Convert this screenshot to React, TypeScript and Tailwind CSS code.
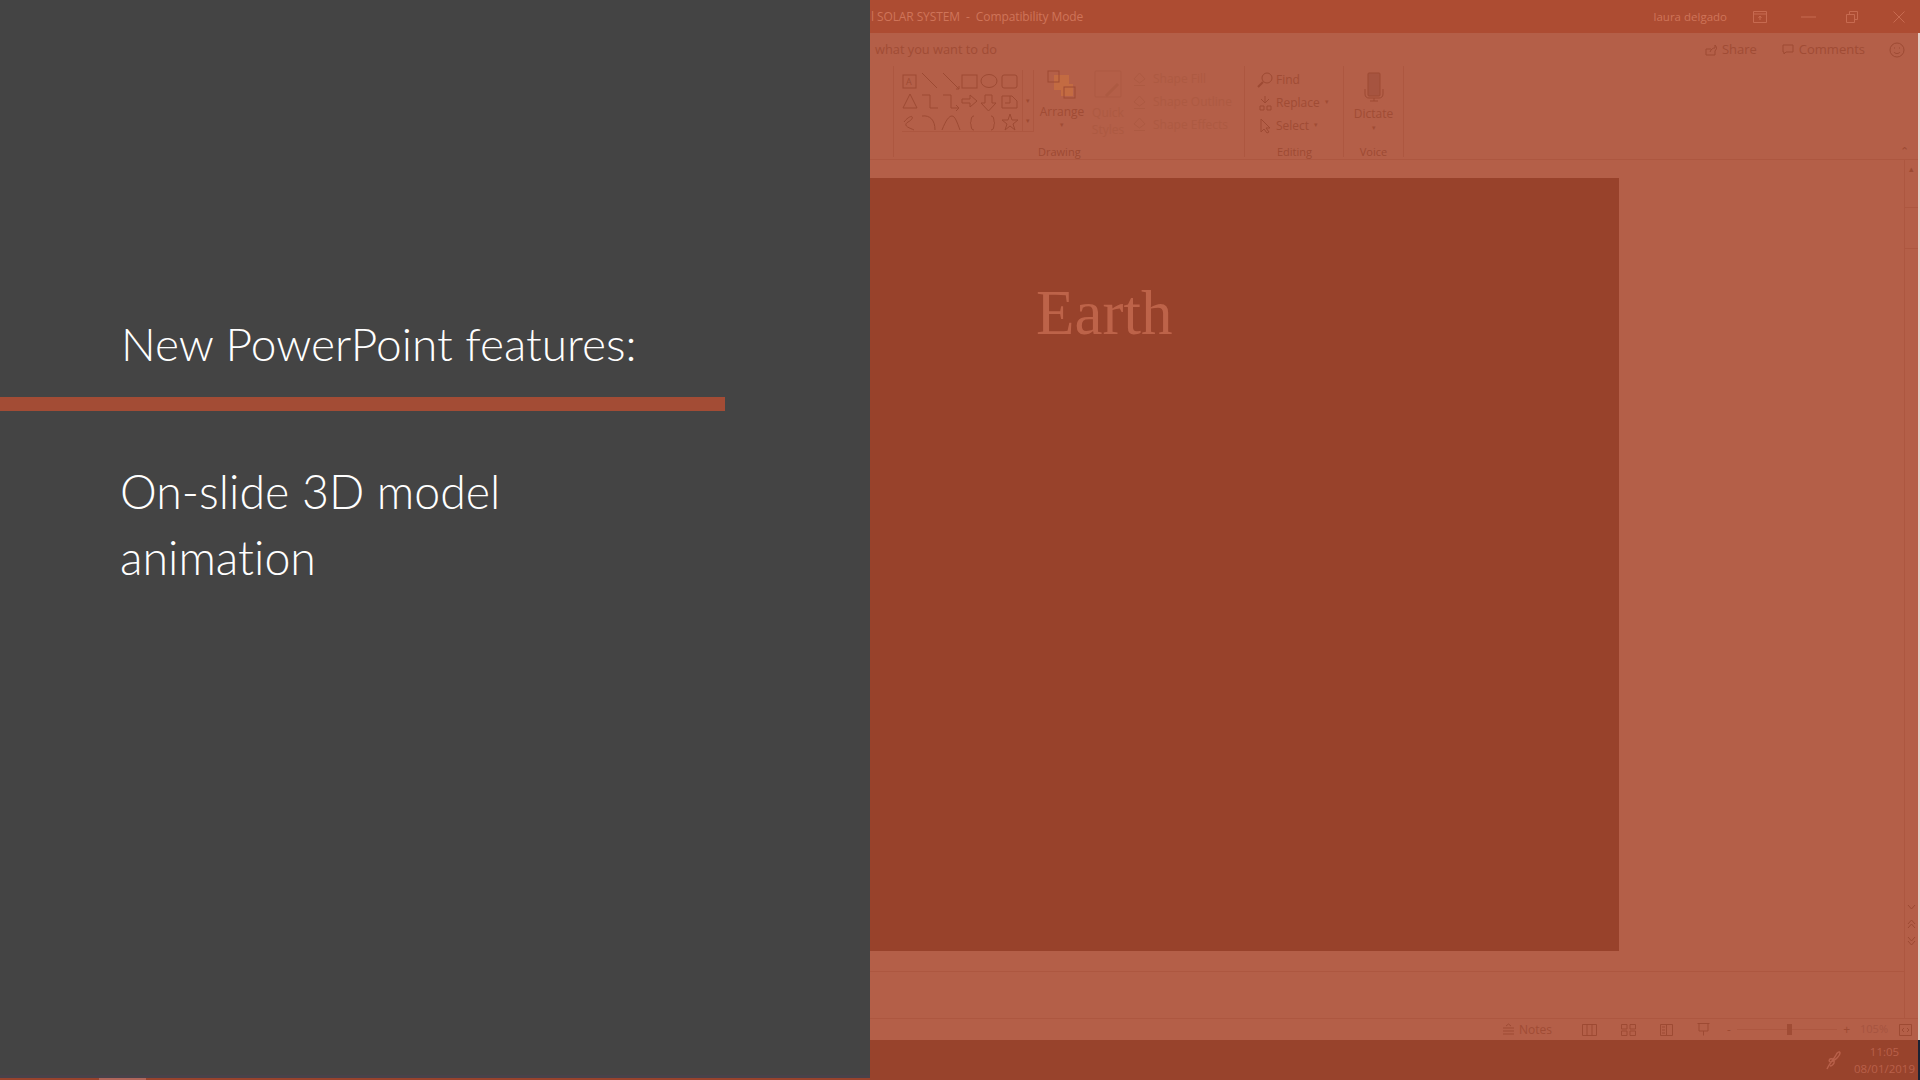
import React from 'react';

const uiFont = "font-['Open_Sans',sans-serif]";

const Stroke: React.FC<{ w: number; h: number; className?: string; children: React.ReactNode }> = ({ w, h, className, children }) => (
  <svg width={w} height={h} viewBox={`0 0 ${w} ${h}`} fill="none" stroke="#9d4a33" strokeWidth="1" className={className}>
    {children}
  </svg>
);

const ShapeGallery: React.FC = () => (
  <div className="flex w-[132px] h-[62px] border-b border-[#ad5740]">
    <Stroke w={120} h={62}>
      <rect x="1" y="5" width="13" height="13" />
      <text x="4" y="15" fontSize="9" fill="#9d4a33" stroke="none">A</text>
      <path d="M20 3 L35 18 M41 3 L57 19 M54 19 H57 V16" />
      <rect x="60" y="5" width="15" height="13" />
      <ellipse cx="87" cy="11" rx="8" ry="6.5" />
      <rect x="100" y="5" width="15" height="13" rx="2" />
      <path d="M1 38 L8 24 L15 38 Z M20 25 H28 V38 H36 M41 25 H49 V38 H57 M54 35 L57 38 L54 41" />
      <path d="M60 29 H68 V25 L75 31 L68 37 V33 H60 Z M83 25 H90 V33 H94 L86.5 41 L79 33 H83 Z" />
      <path d="M100 26 H110 L115 31 V38 H100 Z M108 26 V33 H103" />
      <path d="M2 52 C10 42 14 48 6 52 C0 56 8 58 12 60 M20 46 C28 45 33 50 33 60 M40 60 C44 50 47 46 50 46 C53 46 55 52 58 60" />
      <path d="M72 46 C68 46 70 52 68 53 C70 54 68 60 72 60 M89 46 C93 46 91 52 93 53 C91 54 93 60 89 60" />
      <path d="M108 44 L110 50 H116 L111 54 L113 60 L108 56 L103 60 L105 54 L100 50 H106 Z" />
    </Stroke>
    <div className="flex flex-col items-center justify-around w-[12px] border-x border-[#ad5740] text-[7px] leading-none text-[#9d4a33]">
      <span>&nbsp;</span>
      <span>▾</span>
      <span>▾</span>
    </div>
  </div>
);

const ArrangeIcon: React.FC = () => (
  <svg width="30" height="30" viewBox="0 0 30 30" fill="none" className="shrink-0">
    <rect x="7" y="5" width="15" height="15" fill="#c36b42" />
    <rect x="14" y="14" width="12" height="12" fill="#c36b42" />
    <rect x="1" y="1" width="11" height="11" stroke="#9d4a33" />
    <rect x="17" y="17" width="11" height="11" stroke="#9d4a33" />
  </svg>
);

const FormatRow: React.FC<{ label: string }> = ({ label }) => (
  <div className="flex items-center gap-[6px] h-[23px]">
    <svg width="15" height="15" viewBox="0 0 15 15" fill="none" stroke="#ad5a42">
      <path d="M7.5 1 L13 7 L7.5 11 L2 7 Z M2 13.5 H13" />
    </svg>
    <span className="text-[12px] text-[#ad5a42] whitespace-nowrap">{label}</span>
  </div>
);

const EditRow: React.FC<{ label: string; caret?: boolean; children: React.ReactNode }> = ({ label, caret, children }) => (
  <div className="flex items-center gap-[3px] h-[23px]">
    {children}
    <span className="text-[12px] text-[#a04c35]">{label}</span>
    {caret && <span className="text-[7px] text-[#a04c35] ml-[2px]">▾</span>}
  </div>
);

const Ribbon: React.FC = () => (
  <div className={`h-[127px] bg-[#b45f48] border-b border-[#ad5740] flex flex-col ${uiFont}`}>
    <div className="h-[33px] flex items-center pl-[5px] pr-[13px]">
      <span className="text-[12.8px] text-[#a04c35] flex-1">what you want to do</span>
      <div className="flex items-center gap-[5px] mr-[25px]">
        <Stroke w={12} h={12}>
          <path d="M1 5 H6 M1 5 V11 H10 V7 M5 8 C6 5 8 4 10 4 V1 L12 4 L10 7" />
        </Stroke>
        <span className="text-[13px] text-[#a04c35]">Share</span>
      </div>
      <div className="flex items-center gap-[5px] mr-[24px]">
        <Stroke w={12} h={12}>
          <path d="M1 1 H11 V8 H4 L2 10 V8 H1 Z" />
        </Stroke>
        <span className="text-[13px] text-[#a04c35]">Comments</span>
      </div>
      <Stroke w={16} h={16}>
        <circle cx="8" cy="8" r="7" />
        <path d="M5 10 C6 12 10 12 11 10 M5.5 5.5 V6.5 M10.5 5.5 V6.5" />
      </Stroke>
    </div>
    <div className="flex h-[91px] pl-[23px]">
      <div className="w-[9px] border-l border-[#ad5740]" />
      <div className="flex flex-col items-start w-[343px] border-r border-[#ad5740] pt-[4px]">
        <div className="flex h-[66px] w-full shrink-0">
          <ShapeGallery />
          <div className="flex flex-col items-center w-[52px] pl-[4px]">
            <ArrangeIcon />
            <span className="text-[12px] leading-[16px] mt-[4px] text-[#a04c35]">Arrange</span>
            <span className="text-[7px] text-[#a04c35]">▾</span>
          </div>
          <div className="flex flex-col items-center w-[44px] text-[12px] leading-[17px] text-[#ad5a42]">
            <svg width="28" height="28" viewBox="0 0 28 28" fill="none" stroke="#ad5a42" className="shrink-0">
              <rect x="1" y="1" width="26" height="26" rx="1" />
              <path d="M12 26 L24 14" strokeWidth="3" />
            </svg>
            <span className="mt-[6px]">Quick</span>
            <span>Styles</span>
          </div>
          <div className="flex flex-col pl-[2px] -mt-[2px]">
            <FormatRow label="Shape Fill" />
            <FormatRow label="Shape Outline" />
            <FormatRow label="Shape Effects" />
          </div>
        </div>
        <span className="text-[11px] mt-[8px] ml-[136px] text-[#9d4a33]">Drawing</span>
      </div>
      <div className="flex flex-col w-[99px] border-r border-[#ad5740] pl-[12px] pt-[4px]">
        <div className="h-[68px] -mt-[2px] shrink-0">
          <EditRow label="Find">
            <Stroke w={16} h={16}>
              <circle cx="10" cy="6" r="5" />
              <path d="M6 10 L1 15" strokeWidth="2" />
            </Stroke>
          </EditRow>
          <EditRow label="Replace" caret>
            <Stroke w={16} h={16}>
              <path d="M8 1 V7 M4 4 L8 8 L12 4 M3 11 H7 V15 H3 Z M10 11 H14 V15 H10 Z" />
            </Stroke>
          </EditRow>
          <EditRow label="Select" caret>
            <Stroke w={16} h={16}>
              <path d="M4 1 V14 L7 11 L10 15 L12 14 L9 10 H13 Z" />
            </Stroke>
          </EditRow>
        </div>
        <span className="text-[11px] mt-[8px] pl-[20px] text-[#9d4a33]">Editing</span>
      </div>
      <div className="flex flex-col items-center w-[60px] border-r border-[#ad5740] pt-[6px]">
        <svg width="20" height="30" viewBox="0 0 20 30" fill="none" className="shrink-0">
          <rect x="4" y="1" width="12" height="23" rx="1" fill="#a65440" stroke="#9d4a33" />
          <path d="M1 17 V22 C1 25 3 26 5 26 H15 C17 26 19 25 19 22 V17 M10 26 V29 M6 29 H14" stroke="#9d4a33" />
        </svg>
        <span className="shrink-0 text-[12px] leading-[16px] mt-[4px] text-[#a04c35]">Dictate</span>
        <span className="shrink-0 text-[7px] leading-[12px] text-[#a04c35]">▾</span>
        <span className="shrink-0 text-[11px] mt-[10px] text-[#9d4a33]">Voice</span>
      </div>
      <div className="flex-1 flex items-end justify-end pr-[9px] pb-[1px]">
        <span className="text-[11px] leading-none text-[#9d4a33]">⌃</span>
      </div>
    </div>
  </div>
);

const ScrollBar: React.FC = () => (
  <div className="w-[14px] flex flex-col justify-between items-center border-l border-[#ad5740] pb-[71px] text-[9px] leading-[17px] text-[#9d4a33]">
    <div className="flex flex-col items-center">
      <span>▴</span>
      <div className="w-[13px] h-[42px] mt-[30px] border-y border-[#ad5740]" />
    </div>
    <Stroke w={9} h={44}>
      <path d="M1 2 L4.5 6 L8 2 M1 21 L4.5 17 L8 21 M1 25 L4.5 21 L8 25 M1 38 L4.5 42 L8 38 M1 34 L4.5 38 L8 34" />
    </Stroke>
  </div>
);

const StatusBar: React.FC = () => (
  <div className={`h-[22px] bg-[#b45f48] border-t border-[#ad5740] flex items-center justify-end pr-[6px] ${uiFont}`}>
    <div className="flex items-center gap-[4px] w-[78px]">
      <Stroke w={13} h={13}>
        <path d="M1 5 H12 M1 8 H12 M1 11 H12 M4 3 L6.5 1 L9 3" />
      </Stroke>
      <span className="text-[12px] text-[#a04c35]">Notes</span>
    </div>
    <div className="flex items-center w-[147px] justify-between pl-[2px] pr-[17px]">
      <Stroke w={15} h={12}><path d="M.5.5 H14.5 V11.5 H.5 Z M5 .5 V11.5 M10 .5 V11.5" /></Stroke>
      <Stroke w={15} h={12}><path d="M.5.5 H6 V5 H.5 Z M9 .5 H14.5 V5 H9 Z M.5 7 H6 V11.5 H.5 Z M9 7 H14.5 V11.5 H9 Z" /></Stroke>
      <Stroke w={13} h={12}><path d="M.5.5 H12.5 V11.5 H.5 Z M6.5 .5 V11.5 M2 3 H5 M2 6 H5 M2 9 H5" /></Stroke>
      <Stroke w={13} h={13}><path d="M.5 .5 H12.5 M2 .5 V8 H11 V.5 M6.5 8 V12.5" /></Stroke>
    </div>
    <div className="flex items-center w-[123px] h-[13px] text-[#9d4a33] text-[12px]">
      <span>-</span>
      <div className="flex-1 flex items-center mx-[6px]">
        <div className="w-[50px] h-px bg-[#ad5740]" />
        <div className="w-[5px] h-[11px] bg-[#a04c35]" />
        <div className="flex-1 h-px bg-[#ad5740]" />
      </div>
      <span>+</span>
    </div>
    <span className="text-[11px] text-[#a65440] w-[38px] text-right mr-[11px]">105%</span>
    <Stroke w={13} h={12}>
      <path d="M.5 .5 H12.5 V11.5 H.5 Z M3 6 L5 4 M3 6 L5 8 M10 6 L8 4 M10 6 L8 8" />
    </Stroke>
  </div>
);

const App: React.FC = () => (
  <div className="w-[1920px] h-[1080px] flex overflow-hidden bg-[#98432c]">
    <div className="w-[870px] shrink-0 flex flex-col">
      <div className="h-[1078px] bg-[#444444] border-b-[3px] border-[#48424a] flex flex-col font-['Lato',sans-serif] font-light text-white [font-variant-ligatures:none]">
        <h1 className="pt-[314px] pl-[121px] text-[46px] leading-[60px] font-light">New PowerPoint features:</h1>
        <div className="w-[725px] h-[14px] mt-[23px] bg-[#a34c35]" />
        <p className="pl-[120px] mt-[47px] text-[46.5px] leading-[66px] font-light">
          On-slide 3D model
          <br />
          animation
        </p>
      </div>
      <div className="ml-[99px] w-[47px] h-[2px] bg-[#b0665a]" />
    </div>

    <div className="w-[1048px] shrink-0 flex flex-col">
      <div className={`h-[33px] shrink-0 bg-[#ad4c32] flex items-center text-[12px] text-[#cf7459] ${uiFont}`}>
        <span className="pl-[1px] flex-1 whitespace-pre tracking-[-0.1px]">l SOLAR SYSTEM  -  Compatibility Mode</span>
        <span className="text-[11.5px]">laura delgado</span>
        <svg width="14" height="12" viewBox="0 0 14 12" fill="none" stroke="#c76a50" className="ml-[26px]">
          <path d="M.5 .5 H13.5 V11.5 H.5 Z M.5 3 H13.5 M7 5 V9 M5.5 7 L7 5 L8.5 7" />
        </svg>
        <svg width="15" height="12" viewBox="0 0 15 12" fill="none" stroke="#c76a50" className="ml-[34px]">
          <path d="M0 6 H15" />
        </svg>
        <svg width="12" height="12" viewBox="0 0 12 12" fill="none" stroke="#c76a50" className="ml-[30px]">
          <path d="M.5 3.5 H8.5 V11.5 H.5 Z M3.5 3.5 V.5 H11.5 V8.5 H8.5" />
        </svg>
        <svg width="12" height="12" viewBox="0 0 12 12" fill="none" stroke="#c76a50" className="ml-[35px] mr-[13px]">
          <path d="M.5 .5 L11.5 11.5 M11.5 .5 L.5 11.5" />
        </svg>
      </div>

      <Ribbon />

      <div className="flex-1 flex bg-[#b45f48] min-h-0">
        <div className="flex-1 flex flex-col">
          <div className="flex-1 pt-[18px]">
            <div className="w-[749px] h-[773px] bg-[#98422b] pl-[166px] pt-[100px]">
              <span className="font-['Liberation_Serif',serif] text-[63px] leading-[70px] text-[#bd6349]">Earth</span>
            </div>
          </div>
          <div className="h-[47px] border-t border-[#ad5740]" />
        </div>
        <ScrollBar />
      </div>

      <StatusBar />

      <div className={`h-[40px] shrink-0 bg-[#98432c] flex items-center justify-end ${uiFont}`}>
        <svg width="16" height="22" viewBox="0 0 16 22" fill="none" stroke="#b8604a" strokeWidth="1.5" className="mr-[12px]">
          <path d="M1 20 C3 15 8 10 10 6 C11 3 14 2 14 4 C14 7 9 11 7 12 C4 14 2 12 4 10 C6 9 9 11 8 14 C7 16 5 17 4 17" />
        </svg>
        <div className="flex flex-col items-center text-[11.5px] leading-[17px] text-[#b8604a] pr-[3px]">
          <span>11:05</span>
          <span>08/01/2019</span>
        </div>
      </div>
    </div>

    <div className="w-[2px] shrink-0 flex flex-col">
      <div className="h-[33px] bg-[#ad4c32]" />
      <div className="flex-1 bg-[#e6cfc8]" />
      <div className="h-[40px] bg-[#1b2233]" />
    </div>
  </div>
);

export default App;
